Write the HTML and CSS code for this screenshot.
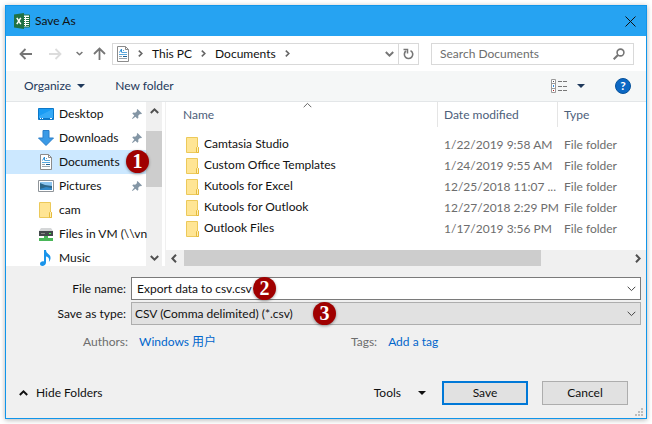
FILE: index.html
```html
<!doctype html>
<html lang="en">
    <head>
        <meta charset="utf-8">
        <meta name="viewport" content="width=device-width,initial-scale=1.0">
        <title>Save As</title>
        <link rel="stylesheet" href="styles.css">
    </head>
    <body>

    <!-- shared icons -->
    <svg class="defs" width="0" height="0" aria-hidden="true">
        <symbol id="folder" viewBox="0 0 14 16">
            <path d="M.5.5h11v10h1v5H.5z" fill="#ffe594" stroke="#ecc95a"/>
            <path d="M10.500 15.500v-5l1-1 1 1v5z" fill="#fff0b8" stroke="#e6bb3c"/>
        </symbol>
        <symbol id="doc" viewBox="0 0 12 16">
            <path d="M.5.5h8l3 3v12H.5z" fill="#fff" stroke="#8b8b8b"/>
            <path d="M8.500.5v3h3" fill="none" stroke="#8b8b8b"/>
            <path d="M6 4.500h1M5 6.500h5M2 8.500h8" stroke="#5ba8dc"/>
            <path d="M2.500 6.500l2-3.500v3.500" fill="none" stroke="#2d8fd5"/>
            <path d="M2 10.500h3M2 12.500h8" stroke="#9aa5ad"/>
            <path d="M6 10h4v1H6z" fill="#1b6297"/>
        </symbol>
        <symbol id="pin" viewBox="0 0 10 10">
            <path d="M5.500 0L10 4.500l-1 .8-1-.4-1.800 1.900.2 2-1 .9-2-2L.6 10 0 9.400l2.300-2.800-2-2 .9-1 2 .2L5.100 2l-.4-1z" fill="#8496a5"/>
        </symbol>
        <symbol id="down" viewBox="0 0 9 6">
            <path d="M.7.8l3.800 3.800L8.300.8" fill="none" stroke="currentColor"/>
        </symbol>
        <symbol id="thick-down" viewBox="0 0 9 6">
            <path d="M.8 1l3.700 3.600L8.200 1" fill="none" stroke="currentColor" stroke-width="2"/>
        </symbol>
        <symbol id="right" viewBox="0 0 5 7">
            <path d="M.8.6l3 2.900-3 2.900" fill="none" stroke="currentColor" stroke-width="1.600"/>
        </symbol>
        <symbol id="caret" viewBox="0 0 8 4">
            <path d="M0 0h8L4 4z" fill="currentColor"/>
        </symbol>
    </svg>

    <main class="dialog">
        <header class="titlebar">
            <svg class="excel" width="16" height="16" viewBox="0 0 16 16">
                <path d="M8 2h7.500v12H8z" fill="#fff" stroke="#207245"/>
                <path d="M9 4.500h2M12 4.500h3M9 6.500h2M12 6.500h3M9 8.500h2M12 8.500h3M9 10.500h2M12 10.500h3M9 12.500h2M12 12.500h3" stroke="#207245"/>
                <path d="M0 1.500L10 0v16L0 14.500z" fill="#207245"/>
                <path d="M2.800 4.800l4 6.400M6.800 4.800l-4 6.400" stroke="#fff" stroke-width="1.500"/>
            </svg>
            <h1>Save As</h1>
            <button class="close" type="button" aria-label="Close">
                <svg width="11" height="11" viewBox="0 0 11 11"><path d="M.5.5l10 10M10.500.5l-10 10" stroke="#111"/></svg>
            </button>
        </header>

        <nav class="navbar">
            <button class="back" type="button" aria-label="Back">
                <svg width="13" height="12" viewBox="0 0 13 12"><path d="M13 6H1.500M6.500 1L1.500 6l5 5" fill="none" stroke="#767676" stroke-width="1.800"/></svg>
            </button>
            <button class="forward" type="button" aria-label="Forward">
                <svg width="13" height="12" viewBox="0 0 13 12"><path d="M0 6h11.500M6.500 1l5 5-5 5" fill="none" stroke="#dcdcdc" stroke-width="1.800"/></svg>
            </button>
            <button class="recent" type="button" aria-label="Recent locations">
                <svg width="7" height="5" viewBox="0 0 9 6"><use href="#thick-down"/></svg>
            </button>
            <button class="up" type="button" aria-label="Up">
                <svg width="13" height="13" viewBox="0 0 13 13"><path d="M6.500 13V1.500M1 7l5.500-5.500L12 7" fill="none" stroke="#767676" stroke-width="1.800"/></svg>
            </button>
            <div class="address">
                <svg width="12" height="16"><use href="#doc"/></svg>
                <svg class="sep" width="5" height="7"><use href="#right"/></svg>
                <a href="#">This PC</a>
                <svg class="sep" width="5" height="7"><use href="#right"/></svg>
                <a href="#">Documents</a>
                <svg class="sep" width="5" height="7"><use href="#right"/></svg>
                <button class="history" type="button" aria-label="Previous locations">
                    <svg width="9" height="6"><use href="#thick-down"/></svg>
                </button>
                <button class="refresh" type="button" aria-label="Refresh">
                    <svg width="11" height="12" viewBox="0 0 11 12"><path d="M7.500 2.600A4.200 4.200 0 1 1 3 3" fill="none" stroke="#767676" stroke-width="1.600"/><path d="M.5 1.500h4v4" fill="none" stroke="#767676" stroke-width="1.500"/></svg>
                </button>
            </div>
            <div class="search">
                <input type="text" placeholder="Search Documents" aria-label="Search Documents">
                <svg width="12" height="12" viewBox="0 0 12 12"><circle cx="7.500" cy="4.500" r="3.400" fill="none" stroke="#767676" stroke-width="1.600"/><path d="M5 7L.7 11.300" stroke="#767676" stroke-width="2"/></svg>
            </div>
        </nav>

        <div class="toolbar">
            <button type="button">Organize <svg width="8" height="4"><use href="#caret"/></svg></button>
            <button class="new" type="button">New folder</button>
            <button class="view" type="button" aria-label="Change your view">
                <svg width="17" height="14" viewBox="0 0 17 14">
                    <path d="M.5.5h4v13h-4zM.5 4.500h4M.5 9.500h4" fill="#fff" stroke="#9a9a9a"/>
                    <path d="M7 2.500h4M12 2.500h4M7 7.500h4M12 7.500h4M7 11.500h4M12 11.500h4" stroke="#777"/>
                    <path d="M2 2h1v1H2z" fill="#555"/><path d="M2 6h1v2H2z" fill="#2b8ce0"/><path d="M2 11h1v1H2z" fill="#a22"/>
                </svg>
                <svg width="8" height="4"><use href="#caret"/></svg>
            </button>
            <button class="help" type="button" aria-label="Help">?</button>
        </div>

        <div class="content">
            <aside class="sidebar">
                <ul>
                    <li><a href="#">
                        <svg width="16" height="16" viewBox="0 0 16 16"><path d="M.5 2.500h15v11H.5z" fill="#1a9cf4" stroke="#0d78c8"/><path d="M1 10l14-7v10H1z" fill="#36aaf7"/><path d="M1 12.500h14" stroke="#0d78c8"/><path d="M2 12.500h1M4 12.500h1M12 12.500h2" stroke="#fff"/></svg>
                        <span>Desktop</span><svg class="pin" width="10" height="10"><use href="#pin"/></svg></a></li>
                    <li><a href="#">
                        <svg width="16" height="16" viewBox="0 0 16 16"><path d="M5 .5h6V8h4.500L8 15.500.5 8H5z" fill="#3a9ae6" stroke="#2a7fca"/></svg>
                        <span>Downloads</span><svg class="pin" width="10" height="10"><use href="#pin"/></svg></a></li>
                    <li class="selected"><a href="#">
                        <svg width="16" height="16"><use href="#doc"/></svg>
                        <span>Documents</span><b class="badge">1</b></a></li>
                    <li><a href="#">
                        <svg width="16" height="16" viewBox="0 0 16 16"><path d="M.5 2.500h15v11H.5z" fill="#fff" stroke="#8f9499"/><path d="M2 4h12v8H2z" fill="#8dc5ef"/><path d="M2 5l5 2 7 1v4H2z" fill="#2d6688"/><path d="M2 11l6-2 6 1v2H2z" fill="#3288c8"/></svg>
                        <span>Pictures</span><svg class="pin" width="10" height="10"><use href="#pin"/></svg></a></li>
                    <li><a href="#">
                        <svg width="16" height="16"><use href="#folder"/></svg>
                        <span>cam</span></a></li>
                    <li><a href="#">
                        <svg width="16" height="16" viewBox="0 0 16 16"><path d="M3 2h10l2 3H1z" fill="#d5d7d8"/><path d="M1 5h14v5H1z" fill="#43484b"/><path d="M3 7.500h4" stroke="#888"/><path d="M11 7h2v1h-2z" fill="#4f4"/><path d="M6 10h4v2h5v3H1v-3h5z" fill="#49b658"/></svg>
                        <span>Files in VM (\\vn</span></a></li>
                    <li><a href="#">
                        <svg width="16" height="16" viewBox="0 0 16 16"><path d="M6 0h2c0 4 5 4 4.500 8.500-.2 1.500-.8 2.500-1.700 3.500C12 8 10 7 8 6.500v6c0 4-6 4.500-6 1.500 0-2 2-3 4-2.500z" fill="#1a94ea"/></svg>
                        <span>Music</span></a></li>
                </ul>
                <div class="vscroll">
                    <svg width="9" height="6" class="flip"><use href="#thick-down"/></svg>
                    <div class="thumb"></div>
                    <svg width="9" height="6"><use href="#thick-down"/></svg>
                </div>
            </aside>

            <section class="files">
                <svg class="sort" width="9" height="6"><use href="#down"/></svg>
                <table>
                    <thead>
                        <tr><th class="name">Name</th><th class="date">Date modified</th><th>Type</th></tr>
                    </thead>
                    <tbody>
                        <tr><td><svg width="14" height="16"><use href="#folder"/></svg>Camtasia Studio</td><td>1/22/2019 9:58 AM</td><td>File folder</td></tr>
                        <tr><td><svg width="14" height="16"><use href="#folder"/></svg>Custom Office Templates</td><td>1/24/2019 9:55 AM</td><td>File folder</td></tr>
                        <tr><td><svg width="14" height="16"><use href="#folder"/></svg>Kutools for Excel</td><td>12/25/2018 11:07 ...</td><td>File folder</td></tr>
                        <tr><td><svg width="14" height="16"><use href="#folder"/></svg>Kutools for Outlook</td><td>12/27/2018 2:29 PM</td><td>File folder</td></tr>
                        <tr><td><svg width="14" height="16"><use href="#folder"/></svg>Outlook Files</td><td>1/17/2019 3:56 PM</td><td>File folder</td></tr>
                    </tbody>
                </table>
                <div class="hscroll">
                    <svg width="6" height="9" viewBox="0 0 6 9"><path d="M5 .8L1.400 4.500 5 8.200" fill="none" stroke="#505050" stroke-width="2"/></svg>
                    <div class="thumb"></div>
                    <svg width="6" height="9" viewBox="0 0 6 9"><path d="M1 .8l3.600 3.700L1 8.200" fill="none" stroke="#505050" stroke-width="2"/></svg>
                </div>
            </section>
        </div>

        <form class="details">
            <div class="row">
                <label for="filename">File name:</label>
                <div class="field">
                    <input id="filename" type="text" value="Export data to csv.csv">
                    <svg width="9" height="6"><use href="#down"/></svg>
                    <b class="badge two">2</b>
                </div>
            </div>
            <div class="row">
                <label for="filetype">Save as type:</label>
                <div class="field">
                    <select id="filetype"><option>CSV (Comma delimited) (*.csv)</option></select>
                    <svg width="9" height="6"><use href="#down"/></svg>
                    <b class="badge three">3</b>
                </div>
            </div>
            <div class="meta">
                <span class="authors">Authors:</span><a class="author" href="#">Windows 用户</a>
                <span>Tags:</span><a href="#">Add a tag</a>
            </div>
            <footer>
                <button class="hide" type="button"><svg class="flip" width="9" height="6"><use href="#thick-down"/></svg>Hide Folders</button>
                <button class="tools" type="button">Tools <svg width="8" height="4"><use href="#caret"/></svg></button>
                <button class="btn primary" type="submit">Save</button>
                <button class="btn" type="button">Cancel</button>
            </footer>
        </form>
        <svg class="grip" width="8" height="8" viewBox="0 0 8 8"><path d="M6 0h2v2H6zM3 3h2v2H3zM6 3h2v2H6zM0 6h2v2H0zM3 6h2v2H3zM6 6h2v2H6z" fill="#bcbcbc"/></svg>
    </main>

    </body>
</html>
```
FILE: styles.css
```css
*{
    margin: 0;
    padding: 0;
    box-sizing: border-box;
}
html,body{
    height: 100%;
}
body{
    padding: 5px;
    background: #fff;
    font: 12px/16px Lato, "Noto Sans CJK SC", sans-serif;
    color: #111;
}
button,input,select{
    font: inherit;
    color: inherit;
    border: 0;
    background: none;
}
a{
    color: inherit;
    text-decoration: none;
}
ul{
    list-style: none;
}
svg{
    display: block;
    flex: none;
}
.defs{
    position: absolute;
}
.flip{
    transform: rotate(180deg);
}
.dialog{
    position: relative;
    display: flex;
    flex-direction: column;
    height: 100%;
    border: 1px solid #1095ea;
    background: #f0f0f0;
    box-shadow: 0 1px 5px rgba(0,0,0,.3);
}

/* title */
.titlebar{
    display: flex;
    align-items: center;
    height: 30px;
    padding: 0 10px 0 8px;
    background: #26a3f2;
}
.titlebar h1{
    flex: 1;
    margin-left: 5px;
    font-size: 12px;
    font-weight: normal;
}

/* address row */
.navbar{
    display: flex;
    align-items: center;
    height: 35px;
    padding: 0 12px 0 13px;
    background: #fff;
}
.forward{
    margin-left: 17px;
}
.recent{
    margin-left: 14px;
    color: #767676;
}
.up{
    margin: 0 6px 0 10px;
}
.address{
    display: flex;
    align-items: center;
    flex: 1;
    height: 22px;
    padding-left: 4px;
    border: 1px solid #d9d9d9;
    white-space: nowrap;
}
.sep{
    margin: 0 9px;
    color: #666;
}
.history{
    margin: 0 4px 0 auto;
    color: #767676;
}
.refresh{
    display: flex;
    align-items: center;
    justify-content: center;
    width: 20px;
    height: 20px;
    border-left: 1px solid #d9d9d9;
}
.search{
    display: flex;
    align-items: center;
    width: 33%;
    height: 22px;
    margin-left: 12px;
    padding: 0 8px;
    border: 1px solid #d9d9d9;
}
.search input{
    flex: 1;
    min-width: 0;
}
.search input::placeholder{
    color: #6d6d6d;
    opacity: 1;
}

/* toolbar */
.toolbar{
    display: flex;
    align-items: center;
    height: 31px;
    padding: 0 15px 0 18px;
    border-bottom: 1px solid #e3e6e8;
    background: #f5f7f7;
    color: #1e395b;
}
.toolbar button{
    display: flex;
    align-items: center;
    gap: 6px;
}
.toolbar .new{
    margin-left: 30px;
}
.toolbar .view{
    gap: 9px;
    margin-left: auto;
}
.toolbar .help{
    justify-content: center;
    width: 16px;
    height: 16px;
    margin-left: 30px;
    border: 1px solid #07529b;
    border-radius: 50%;
    background: #0c68c4;
    color: #fff;
    font-weight: bold;
}

/* folders */
.content{
    display: flex;
    flex: 1;
    min-height: 0;
    overflow: hidden;
    background: #fff;
}
.sidebar{
    display: flex;
    width: 156px;
}
.sidebar ul{
    flex: 1;
    min-width: 0;
}
.sidebar a{
    position: relative;
    display: flex;
    align-items: center;
    gap: 5px;
    height: 24px;
    padding: 0 4px 0 32px;
    white-space: nowrap;
}
.sidebar span{
    flex: 1;
}
.sidebar .selected{
    background: #cce8ff;
}
.vscroll{
    display: flex;
    flex-direction: column;
    align-items: center;
    width: 16px;
    padding: 6px 0 5px;
    background: #f0f0f0;
    color: #505050;
}
.vscroll .thumb{
    width: 100%;
    height: 56px;
    margin: 17px 0 auto;
    background: #cdcdcd;
}

/* file list */
.files{
    position: relative;
    display: flex;
    flex: 1;
    flex-direction: column;
    min-width: 0;
    margin-left: 3px;
    border-left: 1px solid #f0f0f0;
}
.sort{
    position: absolute;
    top: 0;
    left: 137px;
    color: #666;
    transform: rotate(180deg);
}
table{
    width: 100%;
    table-layout: fixed;
    border-collapse: separate;
    border-spacing: 0;
}
th,td{
    padding-left: 6px;
    text-align: left;
    white-space: nowrap;
}
th{
    height: 25px;
    color: #4c607a;
    font-weight: normal;
    border-right: 1px solid #e5e5e5;
}
th:last-child{
    border: 0;
}
th:first-child,td:first-child{
    padding-left: 17px;
}
.name{
    width: 272px;
}
.date{
    width: 120px;
}
td{
    height: 21px;
    color: #6d6d6d;
}
td:first-child{
    padding-left: 20px;
    color: #111;
}
td svg{
    display: inline-block;
    margin-right: 4px;
    vertical-align: middle;
}
tbody::before{
    content: "";
    display: block;
    height: 7px;
}
.hscroll{
    display: flex;
    align-items: center;
    height: 16px;
    margin-top: auto;
    padding: 0 5px;
    background: #f0f0f0;
}
.hscroll .thumb{
    width: 76%;
    height: 100%;
    margin: 0 auto 0 7px;
    background: #cdcdcd;
}

/* name and type */
.details{
    padding: 11px 5px 13px 0;
}
.row{
    display: flex;
    align-items: center;
    margin-bottom: 2px;
}
.row label{
    width: 125px;
    padding-right: 5px;
    text-align: right;
}
.field{
    position: relative;
    flex: 1;
}
.field input,.field select{
    display: block;
    width: 100%;
    height: 23px;
    padding: 0 20px 0 5px;
    border: 1px solid #7a7a7a;
    background: #fff;
}
.field select{
    appearance: none;
    padding-left: 3px;
    border-color: #adadad;
    background: #e1e1e1;
}
.field svg{
    position: absolute;
    top: 9px;
    right: 5px;
    color: #444;
    pointer-events: none;
}
.meta{
    display: flex;
    margin-top: 9px;
    color: #6d6d6d;
}
.meta span{
    margin-right: 11px;
}
.meta .authors{
    width: 122px;
    text-align: right;
}
.meta a{
    color: #0066cc;
}
.meta .author{
    width: 212px;
}
footer{
    display: flex;
    align-items: center;
    margin-top: 31px;
    padding: 0 13px 0 13px;
}
footer button{
    display: flex;
    align-items: center;
}
.hide{
    gap: 8px;
    margin-right: auto;
}
.tools{
    gap: 17px;
    margin-right: 16px;
}
footer .btn{
    justify-content: center;
    width: 86px;
    height: 24px;
    border: 1px solid #adadad;
    background: #e1e1e1;
}
footer .primary{
    margin-right: 14px;
    border: 2px solid #0078d7;
}
.grip{
    position: absolute;
    right: 3px;
    bottom: 2px;
}

/* numbered markers */
.badge{
    position: absolute;
    top: 0;
    left: 120px;
    width: 23px;
    height: 23px;
    border-radius: 50%;
    background: #a00000;
    box-shadow: 0 1px 3px rgba(0,0,0,.4);
    color: #fff;
    font: bold 20px/23px "Liberation Serif", serif;
    text-align: center;
}
.two{
    left: 122px;
}
.three{
    left: 182px;
}
```
